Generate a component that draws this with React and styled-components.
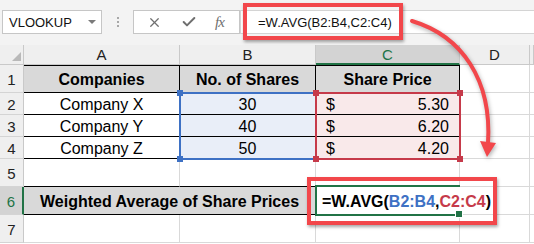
import React from "react";
import styled, { createGlobalStyle } from "styled-components";
import { X, Check } from "lucide-react";

const GlobalStyle = createGlobalStyle`
  html, body { margin: 0; padding: 0; background: #fff; }
  body {
    width: 534px; height: 244px; overflow: hidden;
    font-family: "Liberation Sans", Arial, sans-serif;
  }
`;

const GRID = "#d9d9d9";
const HEAD_BG = "#efefef";
const HEAD_LINE = "#c9c9c9";
const GREEN = "#217346";
const BLUE = "#3e71c4";
const RED = "#c63a4a";
const NOTE = "#f2474b";

const Screen = styled.div`
  position: relative;
  width: 534px;
  height: 244px;
  overflow: hidden;
  background: #fff;
`;

/* ---------- formula bar ---------- */
const Toolbar = styled.div`
  height: 45px;
  box-sizing: border-box;
  background: #f3f3f3;
  display: flex;
  align-items: flex-start;
  padding: 10px 0 0 2px;
`;

const NameBox = styled.div`
  width: 100px;
  height: 24px;
  box-sizing: border-box;
  background: #fff;
  border: 1px solid #c6c6c6;
  display: flex;
  align-items: center;
  justify-content: space-between;
  padding: 0 5px 0 6px;
  font-size: 13px;
  color: #111;
`;

const Caret = styled.span`
  width: 0; height: 0;
  border-left: 4px solid transparent;
  border-right: 4px solid transparent;
  border-top: 4px solid #7a7a7a;
`;

const Grip = styled.div`
  width: 31px;
  height: 24px;
  display: flex;
  flex-direction: column;
  align-items: center;
  justify-content: center;
  gap: 2px;
  & > i {
    display: block;
    width: 2px; height: 2px;
    background: #a8a8a8;
  }
`;

const IconBox = styled.div`
  width: 107px;
  height: 24px;
  box-sizing: border-box;
  background: #fff;
  border: 1px solid #c6c6c6;
  display: flex;
  align-items: center;
  justify-content: space-around;
  padding: 0 6px 0 4px;
  color: #6f6f6f;
`;

const Fx = styled.span`
  font-family: "Liberation Serif", "Times New Roman", serif;
  font-style: italic;
  font-size: 15px;
  color: #6f6f6f;
  letter-spacing: -1px;
`;

const FormulaInput = styled.div`
  flex: 1;
  height: 24px;
  box-sizing: border-box;
  background: #fff;
  border: 1px solid #d4d4d4;
  border-right: none;
  display: flex;
  align-items: center;
  padding-left: 17px;
  font-size: 13px;
  color: #111;
`;

/* ---------- sheet ---------- */
const Sheet = styled.div`
  display: grid;
  grid-template-columns: 24px 156px 136px 144px 70px 4px;
  grid-template-rows: 20px 28px 22px 22px 22px 28px 28px 28px;
`;

const Corner = styled.div`
  position: relative;
  grid-area: 1 / 1;
  background: ${HEAD_BG};
  border-right: 1px solid ${HEAD_LINE};
  border-bottom: 1px solid ${HEAD_LINE};
  &::after {
    content: "";
    position: absolute;
    right: 2px; bottom: 3px;
    width: 9px; height: 9px;
    background: #b9b9b9;
    clip-path: polygon(100% 0, 100% 100%, 0 100%);
  }
`;

const ColHead = styled.div`
  box-sizing: border-box;
  grid-row: 1;
  grid-column: ${(p) => p.$col};
  background: ${(p) => (p.$active ? "#d3d3d3" : HEAD_BG)};
  color: ${(p) => (p.$active ? GREEN : "#222")};
  border-right: 1px solid ${HEAD_LINE};
  border-bottom: ${(p) => (p.$active ? `2px solid ${GREEN}` : `1px solid ${HEAD_LINE}`)};
  display: flex;
  align-items: center;
  justify-content: center;
  font-size: 15px;
`;

const RowHead = styled.div`
  box-sizing: border-box;
  grid-column: 1;
  grid-row: ${(p) => p.$row};
  background: ${(p) => (p.$active ? "#d3d3d3" : HEAD_BG)};
  color: ${(p) => (p.$active ? GREEN : "#222")};
  border-right: ${(p) => (p.$active ? `2px solid ${GREEN}` : `1px solid ${HEAD_LINE}`)};
  border-bottom: 1px solid #d4d4d4;
  display: flex;
  align-items: center;
  justify-content: center;
  font-size: 15px;
  padding-top: 2px;
`;

const Cell = styled.div`
  box-sizing: border-box;
  grid-row: ${(p) => p.$row};
  grid-column: ${(p) => p.$col};
  background: ${(p) => p.$fill || "#fff"};
  border-right: 1px solid ${(p) => (p.$edgeR ? "#000" : GRID)};
  border-bottom: 1px solid ${(p) => (p.$edgeB ? "#000" : GRID)};
  box-shadow: ${(p) => (p.$edgeT ? "inset 0 1px 0 #000" : "none")};
  display: flex;
  align-items: center;
  justify-content: ${(p) => p.$align || "center"};
  padding: 2px 10px 0;
  font-size: 16px;
  font-weight: ${(p) => (p.$bold ? 700 : 400)};
  color: #000;
  white-space: nowrap;
`;

/* selection outline laid over a block of cells */
const Range = styled.div`
  position: relative;
  grid-column: ${(p) => p.$col};
  grid-row: ${(p) => p.$row};
  margin: -1px -1px -1px -1px;
  border: 2px solid ${(p) => p.$color};
  pointer-events: none;
  & > i {
    position: absolute;
    width: 6px; height: 6px;
    background: ${(p) => p.$color};
  }
  & > i:nth-child(1) { left: -4px; top: -4px; }
  & > i:nth-child(2) { right: -4px; top: -4px; }
  & > i:nth-child(3) { left: -4px; bottom: -4px; }
  & > i:nth-child(4) { right: -4px; bottom: -4px; }
`;

const ActiveCell = styled.div`
  position: relative;
  z-index: 1;
  grid-column: 4;
  grid-row: 7;
  box-sizing: border-box;
  margin: -2px 0 -1px -1px;
  border: 2px solid ${GREEN};
  border-right: none;
  display: flex;
  align-items: center;
  padding-left: 4px;
  &::after {
    content: "";
    position: absolute;
    right: -3px; bottom: -4px;
    width: 6px; height: 6px;
    background: ${GREEN};
    border: 1px solid #fff;
  }
`;

const Editor = styled.span`
  background: #fff;
  padding: 2px 6px 0 1px;
  font-size: 16px;
  font-weight: 700;
  white-space: nowrap;
  color: #000;
`;

const Ref = styled.span`
  color: ${(p) => p.$color};
`;

/* ---------- callouts ---------- */
const Callout = styled.div`
  position: absolute;
  left: ${(p) => p.$x}px;
  top: ${(p) => p.$y}px;
  width: ${(p) => p.$w}px;
  height: ${(p) => p.$h}px;
  box-sizing: border-box;
  border: 4px solid ${NOTE};
  box-shadow: 1px 2px 3px rgba(0, 0, 0, 0.35);
  pointer-events: none;
  z-index: 3;
`;

const ArrowLayer = styled.svg`
  position: absolute;
  left: 0; top: 0;
  width: 534px; height: 244px;
  pointer-events: none;
  z-index: 3;
  filter: drop-shadow(1px 2px 2px rgba(0, 0, 0, 0.3));
`;

const companies = [
  ["Company X", "30", "5.30"],
  ["Company Y", "40", "6.20"],
  ["Company Z", "50", "4.20"],
];

const Handles = () => (
  <>
    <i />
    <i />
    <i />
    <i />
  </>
);

export default function App() {
  return (
    <Screen>
      <GlobalStyle />
      <Toolbar>
        <NameBox>
          VLOOKUP
          <Caret />
        </NameBox>
        <Grip>
          <i />
          <i />
          <i />
        </Grip>
        <IconBox>
          <X size={15} strokeWidth={2} />
          <Check size={16} strokeWidth={3} />
          <Fx>fx</Fx>
        </IconBox>
        <FormulaInput>=W.AVG(B2:B4,C2:C4)</FormulaInput>
      </Toolbar>

      <Sheet>
        <Corner />
        <ColHead $col={2}>A</ColHead>
        <ColHead $col={3}>B</ColHead>
        <ColHead $col={4} $active>C</ColHead>
        <ColHead $col={5}>D</ColHead>
        <ColHead $col={6} />

        {/* row 1: table headings */}
        <RowHead $row={2}>1</RowHead>
        <Cell $row={2} $col={2} $fill="#d9d9d9" $bold $edgeR $edgeB $edgeT>Companies</Cell>
        <Cell $row={2} $col={3} $fill="#d9d9d9" $bold $edgeR $edgeB $edgeT>No. of Shares</Cell>
        <Cell $row={2} $col={4} $fill="#d9d9d9" $bold $edgeR $edgeB $edgeT>Share Price</Cell>
        <Cell $row={2} $col={5} />
        <Cell $row={2} $col={6} />

        {/* rows 2-4: data */}
        {companies.map(([name, shares, price], i) => {
          const row = i + 3;
          return (
            <React.Fragment key={name}>
              <RowHead $row={row}>{i + 2}</RowHead>
              <Cell $row={row} $col={2} $edgeB>{name}</Cell>
              <Cell $row={row} $col={3} $edgeB $fill="#e9eef8">{shares}</Cell>
              <Cell $row={row} $col={4} $edgeB $fill="#f9e9ea" $align="space-between">
                <span>$</span>
                <span>{price}</span>
              </Cell>
              <Cell $row={row} $col={5} />
              <Cell $row={row} $col={6} />
            </React.Fragment>
          );
        })}

        {/* row 5 */}
        <RowHead $row={6}>5</RowHead>
        <Cell $row={6} $col={2} $edgeB />
        <Cell $row={6} $col={3} $edgeB />
        <Cell $row={6} $col={4} />
        <Cell $row={6} $col={5} />
        <Cell $row={6} $col={6} />

        {/* row 6: result */}
        <RowHead $row={7} $active>6</RowHead>
        <Cell $row={7} $col="2 / 4" $fill="#d9d9d9" $bold $edgeR $edgeB>
          Weighted Average of Share Prices
        </Cell>
        <ActiveCell>
          <Editor>
            =W.AVG(<Ref $color={BLUE}>B2:B4</Ref>,<Ref $color={RED}>C2:C4</Ref>)
          </Editor>
        </ActiveCell>
        <Cell $row={7} $col={5} />
        <Cell $row={7} $col={6} />

        {/* row 7 */}
        <RowHead $row={8}>7</RowHead>
        <Cell $row={8} $col={2} />
        <Cell $row={8} $col={3} />
        <Cell $row={8} $col={4} />
        <Cell $row={8} $col={5} />
        <Cell $row={8} $col={6} />

        <Range $col="3" $row="3 / 6" $color={BLUE}>
          <Handles />
        </Range>
        <Range $col="4" $row="3 / 6" $color={RED}>
          <Handles />
        </Range>
      </Sheet>

      <Callout $x={243} $y={3} $w={160} $h={37} />
      <Callout $x={307} $y={177} $w={190} $h={48} />

      <ArrowLayer viewBox="0 0 534 244">
        <path
          d="M 412 21 C 462 36, 492 80, 488 143"
          fill="none"
          stroke={NOTE}
          strokeWidth="4"
          strokeLinecap="round"
        />
        <polygon points="480,141 496,143 487,157" fill={NOTE} />
      </ArrowLayer>
    </Screen>
  );
}
